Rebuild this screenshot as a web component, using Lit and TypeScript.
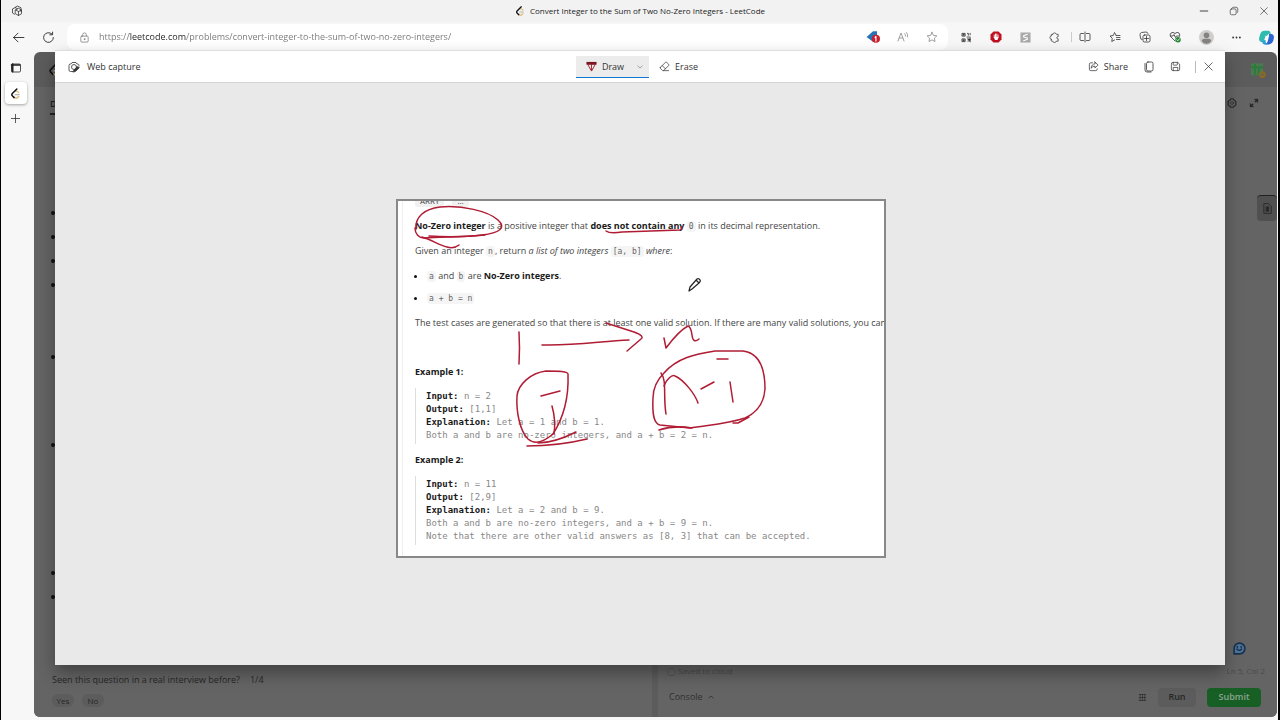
import { LitElement, html, css, svg } from "lit";
import { customElement } from "lit/decorators.js";

const icon = (body: unknown, size = 12, box = 24) => html`<svg
  class="ic" width=${size} height=${size} viewBox="0 0 ${box} ${box}" aria-hidden="true">${body}</svg>`;

const leet = svg`<path d="M11 14.500h9" stroke="#b5b5b5" stroke-width="2.400"/><path d="m10 20 2 1.500q2 1 4 0l3-3M12 7q3-1 5 1l2 2" stroke="#dcb765" stroke-width="2.600"/><path d="M15 2 5 12a3.500 3.500 0 0 0 0 5l4 4" stroke="#111" stroke-width="3.200"/>`;
const workspaces = svg`<path d="M3 8.500 8 5l5 2.500M3 8.500V16l4 2.500M8 5l5-3 7 3.500V13M9 10l6-3.500 6 3.500v7.500L15 21l-6-3.500zM9 10l6 3 6-3M15 13v8" />`;
const back = svg`<path d="M22 12H3M11 4l-8 8 8 8"/>`;
const reload = svg`<path d="M21 12a9 9 0 1 1-3-6.700M19.500 2v5h-5"/>`;
const lock = svg`<rect x="4" y="9" width="16" height="13" rx="2"/><path d="M8 9V6a4 4 0 0 1 8 0v3"/><circle cx="12" cy="15.500" r="1" fill="currentColor"/>`;
const tabs = svg`<rect x="3" y="4" width="18" height="16" rx="2.500"/><path d="M5 5v14" stroke-width="4"/><path d="M3 6h17" stroke-width="3"/>`;
const plus = svg`<path d="M12 3v18M3 12h18"/>`;
const tag = svg`<path d="M1 12 12 2h7v18h-7z" fill="#2673b8" stroke="none"/><circle cx="17" cy="15" r="7" fill="#c8202f" stroke="none"/><path d="M17 11v8M15.500 12.500 17 11" stroke="#fff" stroke-width="2"/>`;
const readAloud = svg`<path d="M2 20 8 4l6 16M4.500 14h7M15 5q3 2 2 5M19 3q4 4 2 9" stroke="#888"/>`;
const star = svg`<path d="m12 2.500 3 6.200 6.700.9-4.900 4.700 1.200 6.700-6-3.200-6 3.200 1.200-6.700L2.300 9.600 9 8.700z" stroke="#888"/>`;
const qr = svg`<path d="M3 3h6v6H3zM3 15h6v6H3zM14 3h2v4M20 3v3M13 11h7M14 15l6 6M20 13v3M15 20h1" stroke-width="1.800"/><path d="M5 5h2v2H5zM5 17h2v2H5zM16 15h4v5z" fill="currentColor"/>`;
const blocker = svg`<path d="M7 1h10l6 6v10l-6 6H7l-6-6V7z" fill="#c0101f" stroke="none"/><path d="M8.500 13V8M11 13V6M13.500 13V6M16 13V8" stroke="#fff" stroke-width="1.800"/><path d="M7.500 12H17l-2 6h-5z" fill="#fff" stroke="none"/>`;
const noteExt = svg`<path d="M1 1h22v22H1z" fill="#aaa" stroke="none"/><path d="m16 5-8 3v3l8 2v3l-8 3" stroke="#fff" stroke-width="2.500"/>`;
const puzzle = svg`<path d="M8 5q1-3 4-3t4 3h4v5q-3 0-3 2.500T20 15v5h-4q-1 3-4 3t-4-3H6q-1 0-1-1v-3M5 8V6q0-1 1-1h2"/><path d="M5 16q-3-.5-3-4t3-4"/>`;
const split = svg`<path d="M9 5H4q-2 0-2 2v10q0 2 2 2h5M15 5h5q2 0 2 2v10q0 2-2 2h-5M12 2v20"/>`;
const favs = svg`<path d="m14 8-3-5-2.500 6L2 10l4.500 4.500L5.500 21l5.500-3M14 9h8M15 13h7M15 17h7"/>`;
const collections = svg`<path d="M6 17q-3 0-3-3L2 7q0-3 3-4l9-1q3 0 4 3"/><rect x="8" y="8" width="14" height="14" rx="3"/><path d="M15 11v8M11 15h8"/>`;
const health = svg`<path d="M12 20 4 12q-4-4 0-8 4-3 8 1 4-4 8-1 3 4 1 7M3 10h5l2-3 3 6 2-3h4"/><circle cx="18" cy="17.500" r="5.500" fill="#2a8a3c" stroke="none"/><path d="m15.500 17.500 2 2 3.500-4" stroke="#fff"/>`;
const avatar = svg`<circle cx="12" cy="12" r="12" fill="#d0cecb" stroke="none"/><circle cx="12" cy="8.500" r="4.500" fill="#858381" stroke="none"/><path d="M4.500 18q0-4 4-4h7q4 0 4 4-3 4-7.500 4t-7.500-4z" fill="#858381" stroke="none"/>`;
const dots = svg`<g fill="currentColor" stroke="none"><circle cx="3" cy="12" r="2.500"/><circle cx="12" cy="12" r="2.500"/><circle cx="21" cy="12" r="2.500"/></g>`;
const copilot = svg`<path d="M16 6h2q5 0 6 5-1 11-8 12H9q4-1 5-5l2-8z" fill="#2b66d2" stroke="none"/><path d="M8 1h7q3 0 4 5h-3q-2 0-3 4l-2 6q-1 3-4 3-5 0-7-5Q2 1 8 1z" fill="#2fbcae" stroke="none"/><path d="M0 14q2 4 7 4l3-1q1 5 4 6H9q-3 0-4-4-5 0-5-5z" fill="#2a9fd8" stroke="none"/><path d="m10.500 9-2 7h4l3-7z" fill="#fff" stroke="none"/>`;
const minimise = svg`<path d="M3 12h18" stroke-width="2.200"/>`;
const restore = svg`<rect x="3" y="7" width="14" height="14" rx="3"/><path d="M8 4q1-1 3-1h6q4 0 4 4v6q0 2-1 3"/>`;
const close = svg`<path d="m4 4 16 16M20 4 4 20"/>`;
const capture = svg`<path d="M10 21H5q-3 0-3-3V9q0-3 3-3h1l2-3h8l2 3h1q3 0 3 3v1"/><circle cx="12" cy="12" r="5"/><path d="m12 18 8-7 2.500 2.500-8 7.500-4 1z" fill="currentColor"/>`;
const penNib = svg`<path d="M1 2h22v6H1z" fill="#7d1420" stroke="none"/><path d="m4 8 8 14 8-14z" stroke="#8a2a35" stroke-width="2" fill="#f6e4e6"/><path d="M12 8v7" stroke="#8a2a35" stroke-width="2"/><path d="m9.500 16 2.500 6 2.500-6z" fill="#c01525" stroke="none"/>`;
const chevron = svg`<path d="m3 8 9 8 9-8" stroke-width="3"/>`;
const chevronUp = svg`<path d="m3 16 9-8 9 8" stroke-width="3.500"/>`;
const eraser = svg`<path d="m3 14 11-11q1.500-1 3 0l4 4q1 1.500 0 3L10 21H8l-5-5q-.8-1 0-2zM7 10l7 7M10 21h11"/>`;
const share = svg`<path d="M10 4H6Q3 4 3 7v11q0 3 3 3h11q3 0 3-3v-1M15 2l7 7-7 6v-4q-6 0-8 5 0-9 8-10z"/>`;
const copy = svg`<rect x="7" y="2" width="13" height="18" rx="3"/><path d="M4 5v13q0 4 4 4h8"/>`;
const save = svg`<path d="M3 6q0-3 3-3h11l4 4v11q0 3-3 3H6q-3 0-3-3zM7 3v5q0 1 1 1h7q1 0 1-1V3M7 21v-7h10v7"/>`;
const gear = svg`<path d="M9 2h6l1 3 3 1 3 4-2 2 2 3-3 4-3 1-1 2H9l-1-2-3-1-3-4 2-3-2-2 3-4 3-1z" stroke-width="2.500"/><circle cx="12" cy="12" r="3.500"/>`;
const expand = svg`<path d="M14 3h7v7zM3 14v7h7z" fill="currentColor"/><path d="m20 4-5 5M4 20l5-5" stroke-width="3"/>`;
const grid = svg`<path d="M3 4h18M3 12h18M3 20h18M6 4v16M12 4v16M18 4v16"/>`;
const smile = svg`<path d="M2 22V12A10 10 0 1 1 12 22z" stroke="#16324f" stroke-width="3" fill="#4f7397"/><path d="M8 8v2M15 8v2M7 13q5 5 9 0" stroke="#16324f" stroke-width="2.500"/>`;
const note = svg`<path d="M6 3h8l5 5v13H6z"/><path d="M10 9h4v8h-4z" fill="currentColor"/>`;
const user = svg`<path d="M3 2h18v18H3z" fill="#4a7a52" stroke="none"/><path d="M4 8h16M9 4v14M15 9v9" stroke="#2c7a3c" stroke-width="3"/><circle cx="20" cy="19" r="5" fill="#8a6a22" stroke="none"/><circle cx="20" cy="19" r="2" fill="#636363" stroke="none"/>`;

const ink = [
  "M416 229C415 217 424 209 440 207C462 205 488 211 498 220C507 228 499 233 482 235C462 238 438 236 424 238C419 238 415 234 415 228",
  "M422 237C432 240 439 245 447 247Q454 249 459 245",
  "M429 236Q456 238 485 235",
  "M606 231Q610 234 622 232L680 230Q683 228 681 227",
  "M519 332Q520 348 519 364",
  "M542 345C575 346 602 341 629 340",
  "M606 323L634 332Q645 336 641 339L627 351",
  "M664 338L666 348C672 340 680 330 688 326Q691 327 692 335Q693 344 699 339",
  "M568 374C568 371 558 371 546 371C530 373 518 385 517 396C516 412 520 431 528 439C536 446 546 440 553 434C562 420 569 400 568 374Z",
  "M541 396L560 391", "M552 406Q556 420 554 434",
  "M576 432C562 439 548 443 538 443", "M527 446Q558 446 587 439",
  "M717 359H728",
  "M664 373C677 358 695 354 715 351H743C759 353 765 367 765 389C764 403 756 413 745 418C727 424 708 425 690 428L660 425C655 424 652 418 653 398Q653 384 664 373",
  "M661 373C667 380 663 396 666 414", "M664 386C666 380 672 374 675 376C684 380 695 394 698 403",
  "M701 389L714 382", "M730 382L733 402",
  "M749 417L738 423H733", "M659 430C668 427 680 426 692 428",
];

@customElement("app-root")
export class AppRoot extends LitElement {
  static styles = css`
    :host { display: block; font: 9px/12px "Open Sans", "Noto Sans", sans-serif; color: #333; }
    * { box-sizing: border-box; }
    button, input { font: inherit; color: inherit; border: 0; background: none; padding: 0; margin: 0; }
    button { display: flex; align-items: center; justify-content: center; white-space: nowrap; }
    h1, h2, h3, p, ul, pre { margin: 0; font-size: inherit; font-weight: inherit; }
    .ic { display: block; flex: none; fill: none; stroke: currentColor; stroke-width: 1.600; stroke-linecap: round; stroke-linejoin: round; overflow: visible; }
    .window { display: flex; flex-direction: column; height: 100vh; background: #f7f7f7; border-left: 1px solid #000; border-right: 2px solid #000; overflow: hidden; }
    .titlebar { display: grid; grid-template-columns: 1fr auto 1fr; align-items: center; height: 22px; background: #f2f2f2; padding: 0 9px 0 10px; flex: none; }
    .title { display: flex; align-items: center; gap: 5px; font-size: 8px; color: #222; }
    .controls { display: flex; justify-content: flex-end; gap: 20px; }
    .toolbar { display: flex; align-items: center; height: 30px; padding: 0 4px 0 11px; flex: none; }
    .nav { display: flex; gap: 17px; width: 55px; flex: none; color: #222; }
    .address { display: flex; align-items: center; flex: 1; height: 26px; background: #fff; border-radius: 8px; padding: 0 10px 0 12px; gap: 9px; color: #777; }
    .url { flex: 1; min-width: 0; color: #767676; -webkit-text-fill-color: transparent; background: linear-gradient(90deg, #767676 30px, #222 30px 87px, #767676 87px); -webkit-background-clip: text; background-clip: text; }
    .inbar { display: flex; gap: 17px; }
    .tools { display: flex; align-items: center; gap: 18px; padding-left: 13px; }
    .sep { width: 1px; height: 10px; background: #ccc; margin: 0 -11px 0 -7px; }
    .body { display: flex; flex: 1; min-height: 0; padding: 0 1px 3px 0; }
    .side { display: flex; flex-direction: column; align-items: center; width: 29px; margin-right: 4px; gap: 3px; padding-top: 5px; flex: none; color: #222; }
    .side button { width: 22px; height: 22px; border-radius: 4px; }
    .side .on { background: #fff; box-shadow: 0 1px 3px rgba(0, 0, 0, 0.35); }
    .page { position: relative; flex: 1; min-width: 0; display: flex; flex-direction: column; background: #5c5c5c; border-radius: 6px; color: #262626; }
    .sitebar { display: flex; align-items: center; justify-content: space-between; height: 35px; padding: 0 12px 0 14px; flex: none; }
    .panes { display: flex; flex: 1; min-height: 0; gap: 6px; }
    .left { display: flex; flex-direction: column; width: 618px; background: #646464; padding: 11px 0 10px 16px; border-radius: 0 0 0 6px; }
    .tab { align-self: flex-start; font-weight: 600; border-bottom: 2px solid #222; padding-bottom: 3px; color: #222; }
    .marks { flex: 1; display: flex; flex-direction: column; gap: 20px; padding: 96px 0 0 1px; }
    .mark { width: 4px; height: 4px; border-radius: 2px; background: #111; }
    .para { margin-top: 48px; }
    .block { margin-top: 64px; }
    .limits { margin-top: 104px; }
    .asked { display: flex; gap: 10px; padding-left: 2px; }
    .answers { display: flex; gap: 8px; padding: 8px 0 0 2px; font-size: 8px; }
    .answers button { background: #5c5c5c; border-radius: 6px; height: 13px; width: 22px; }
    .right { flex: 1; display: flex; flex-direction: column; background: #646464; border-radius: 0 0 6px 0; }
    .gears { display: flex; justify-content: flex-end; gap: 12px; padding: 11px 18px 0; }
    .notes { align-self: flex-end; width: 20px; height: 26px; margin-top: 87px; background: #505050; border-radius: 4px; border-top: 1px solid #222; }
    .help { display: flex; justify-content: flex-end; margin-top: auto; padding: 0 31px 8px; }
    .status { display: flex; justify-content: space-between; padding: 2px 12px 0 9px; color: #4a4a4a; font-size: 8px; }
    .actions { display: flex; align-items: center; height: 40px; padding: 0 16px 0 11px; gap: 11px; }
    .console { gap: 5px; margin-right: auto; color: #303030; }
    .run { width: 38px; height: 19px; background: #5c5c5c; border-radius: 4px; font-weight: 600; }
    .submit { width: 54px; height: 19px; background: #185f25; border-radius: 4px; color: #8ca491; font-weight: 600; }
    .dialog { position: absolute; inset: -2px 52px 52px 21px; display: flex; flex-direction: column; background: #e9e9e9; box-shadow: 0 8px 16px rgba(0, 0, 0, 0.35); border-top: 1px solid #ddd; color: #333; }
    .dhead { display: grid; grid-template-columns: 1fr auto 1fr; align-items: center; height: 32px; background: #fff; border-bottom: 1px solid #d4d4d4; padding: 0 11px 0 13px; flex: none; }
    .name, .modes, .share { display: flex; align-items: center; }
    .name { gap: 7px; }
    .modes { gap: 10px; padding-right: 8px; }
    .draw { height: 22px; width: 73px; background: #ececec; box-shadow: inset 0 -1px #0f78d4; gap: 5px; padding-left: 4px; }
    .draw .drop { padding-left: 8px; color: #888; }
    .erase, .share { gap: 5px; }
    .ends { display: flex; align-items: center; justify-content: flex-end; gap: 15px; }
    .bar { width: 1px; height: 12px; background: #bbb; margin: 0 -8px 0 -1px; }
    .stage { flex: 1; display: flex; align-items: center; justify-content: center; padding: 9px 0 0 2px; }
    .shot { position: relative; width: 490px; height: 359px; border: 2px solid #888; background: #fff; overflow: hidden; padding-left: 4px; white-space: nowrap; color: #444; }
    .doc { border-left: 1px solid #eee; height: 100%; padding-left: 12px; }
    .cut { display: flex; gap: 8px; height: 6px; align-items: flex-end; overflow: hidden; font-size: 8px; }
    .cut span { background: #f1f1f1; border-radius: 3px; padding: 0 5px; }
    .doc p { height: 13px; line-height: 13px; }
    .p1 { margin-top: 12px; }
    .p2 { margin-top: 12px; }
    b { font-weight: 700; color: #1a1a1a; }
    code, pre { font-family: "DejaVu Sans Mono", monospace; }
    code { font-size: 8px; font-style: normal; background: #f5f5f5; border-radius: 3px; padding: 1px 2px; color: #666; }
    .doc ul { padding: 12px 0 0 12px; display: flex; flex-direction: column; gap: 9px; }
    .doc li { height: 13px; line-height: 13px; }
    .doc li::marker { color: #111; }
    .p3 { margin-top: 12px; }
    h3 { height: 13px; line-height: 13px; font-weight: 700; color: #1a1a1a; }
    .ex1 { margin-top: 36px; }
    .ex2 { margin-top: 9px; }
    pre { margin-top: 10px; border-left: 1px solid #ddd; padding: 2px 0 2px 10px; line-height: 13px; font-size: 9px; color: #888; }
    .ink { position: absolute; left: 0; top: 0; fill: none; stroke: #b01c34; stroke-width: 1.500; stroke-linecap: round; stroke-linejoin: round; }
  `;

  render() {
    return html`
      <div class="window">
        <header class="titlebar">
          <div>${icon(workspaces, 12)}</div>
          <h1 class="title">${icon(leet, 10)}Convert Integer to the Sum of Two No-Zero Integers - LeetCode</h1>
          <div class="controls">
            <button aria-label="Minimise">${icon(minimise, 10)}</button>
            <button aria-label="Restore">${icon(restore, 10)}</button>
            <button aria-label="Close window">${icon(close, 10)}</button>
          </div>
        </header>
        <div class="toolbar">
          <nav class="nav">
            <button aria-label="Back">${icon(back, 13)}</button>
            <button aria-label="Reload">${icon(reload, 13)}</button>
          </nav>
          <div class="address">
            ${icon(lock, 11)}
            <input class="url" aria-label="Address" value="https://leetcode.com/problems/convert-integer-to-the-sum-of-two-no-zero-integers/" />
            <div class="inbar">
              <button aria-label="Shopping">${icon(tag, 14)}</button>
              <button aria-label="Read aloud">${icon(readAloud, 12)}</button>
              <button aria-label="Favourite">${icon(star, 12)}</button>
            </div>
          </div>
          <div class="tools">
            <button aria-label="QR code">${icon(qr, 11)}</button>
            <button aria-label="Ad blocker">${icon(blocker, 12)}</button>
            <button aria-label="Notes extension">${icon(noteExt, 11)}</button>
            <button aria-label="Extensions">${icon(puzzle, 11)}</button>
            <span class="sep"></span>
            <button aria-label="Split screen">${icon(split, 12)}</button>
            <button aria-label="Favourites">${icon(favs, 12)}</button>
            <button aria-label="Collections">${icon(collections, 12)}</button>
            <button aria-label="Browser essentials">${icon(health, 12)}</button>
            <button aria-label="Profile">${icon(avatar, 15)}</button>
            <button aria-label="More">${icon(dots, 9)}</button>
            <button aria-label="Copilot">${icon(copilot, 15)}</button>
          </div>
        </div>
        <div class="body">
          <nav class="side">
            <button aria-label="Tab actions">${icon(tabs, 12)}</button>
            <button class="on" aria-label="LeetCode tab">${icon(leet, 11)}</button>
            <button aria-label="New tab">${icon(plus, 11)}</button>
          </nav>
          <main class="page">
            <div class="sitebar">${icon(leet, 13)}${icon(user, 16)}</div>
            <div class="panes">
              <section class="left">
                <h2 class="tab">Description</h2>
                <div class="marks">
                  <span class="mark"></span><span class="mark"></span><span class="mark"></span><span class="mark"></span>
                  <span class="mark para"></span>
                  <span class="mark block"></span>
                  <span class="mark limits"></span><span class="mark"></span>
                </div>
                <p class="asked"><span>Seen this question in a real interview before?</span><span>1/4</span></p>
                <div class="answers"><button>Yes</button><button>No</button></div>
              </section>
              <section class="right">
                <div class="gears">${icon(gear, 10)}${icon(expand, 10)}</div>
                <button class="notes" aria-label="Notes">${icon(note, 13)}</button>
                <div class="help"><button aria-label="Help">${icon(smile, 13)}</button></div>
                <div class="status"><span>◯ Saved to cloud</span><span>Ln 5, Col 2</span></div>
                <div class="actions">
                  <button class="console">Console ${icon(chevronUp, 6)}</button>
                  ${icon(grid, 9)}
                  <button class="run">Run</button>
                  <button class="submit">Submit</button>
                </div>
              </section>
            </div>
            <section class="dialog" role="dialog" aria-label="Web capture">
              <header class="dhead">
                <div class="name">${icon(capture, 12)}<span>Web capture</span></div>
                <div class="modes">
                  <button class="draw">${icon(penNib, 11)}<span>Draw</span><span class="drop">${icon(chevron, 6)}</span></button>
                  <button class="erase">${icon(eraser, 11)}<span>Erase</span></button>
                </div>
                <div class="ends">
                  <button class="share">${icon(share, 11)}<span>Share</span></button>
                  <button aria-label="Copy">${icon(copy, 12)}</button>
                  <button aria-label="Save">${icon(save, 11)}</button>
                  <span class="bar"></span>
                  <button aria-label="Close capture">${icon(close, 11)}</button>
                </div>
              </header>
              <div class="stage">
                <article class="shot">
                  <div class="doc">
                    <div class="cut"><span>ARRY</span><span>...</span></div>
                    <p class="p1"><b>No-Zero integer</b> is a positive integer that <b>does not contain any</b> <code>0</code> in its decimal representation.</p>
                    <p class="p2">Given an integer <code>n</code>, return <i>a list of two integers</i> <code>[a, b]</code> <i>where</i>:</p>
                    <ul>
                      <li><code>a</code> and <code>b</code> are <b>No-Zero integers</b>.</li>
                      <li><code>a + b = n</code></li>
                    </ul>
                    <p class="p3">The test cases are generated so that there is at least one valid solution. If there are many valid solutions, you can return any of them.</p>
                    <h3 class="ex1">Example 1:</h3>
                    <pre><b>Input:</b> n = 2
<b>Output:</b> [1,1]
<b>Explanation:</b> Let a = 1 and b = 1.
Both a and b are no-zero integers, and a + b = 2 = n.</pre>
                    <h3 class="ex2">Example 2:</h3>
                    <pre><b>Input:</b> n = 11
<b>Output:</b> [2,9]
<b>Explanation:</b> Let a = 2 and b = 9.
Both a and b are no-zero integers, and a + b = 9 = n.
Note that there are other valid answers as [8, 3] that can be accepted.</pre>
                  </div>
                  <svg class="ink" width="486" height="355" viewBox="398 201 486 355" aria-hidden="true">
                    ${ink.map((d) => svg`<path d=${d} />`)}
                    <path d="M689 291l1-4 7-8q2-1 3 1 1 1-1 3l-7 6zM696 280l3 3" fill="#fff" stroke="#222" stroke-width="1.200" />
                  </svg>
                </article>
              </div>
            </section>
          </main>
        </div>
      </div>
    `;
  }
}
